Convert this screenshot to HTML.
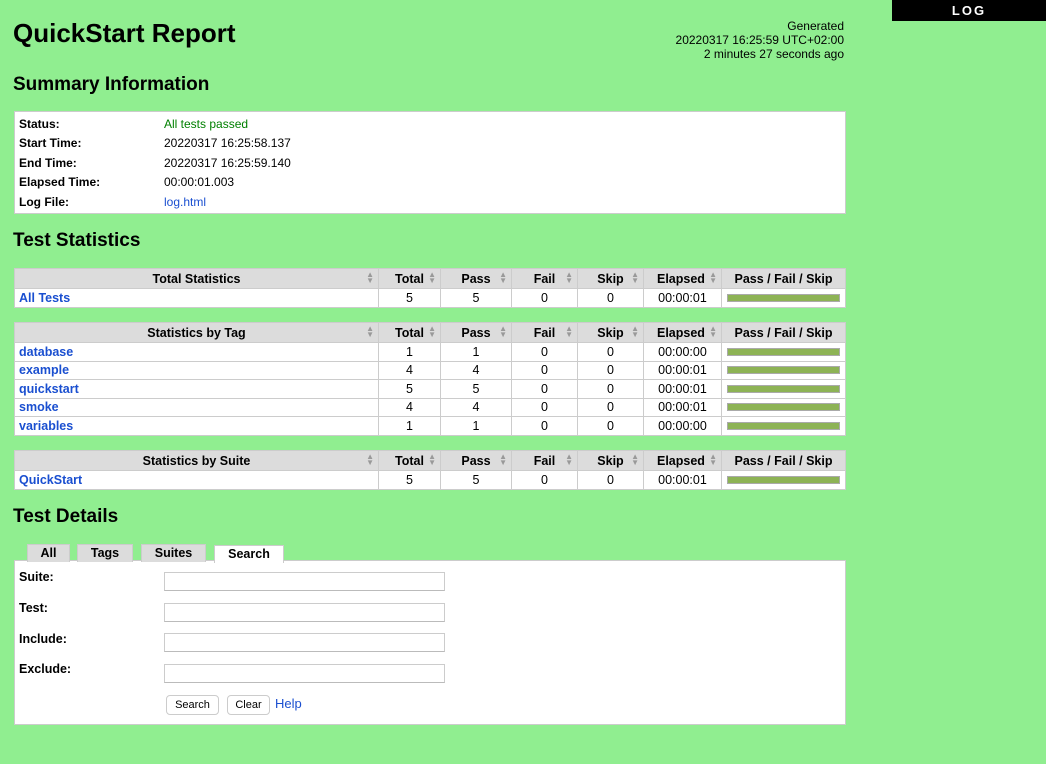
<!DOCTYPE html>
<html><head><meta charset="utf-8"><style>
body{margin:0;background:#90ee90;font-family:"Liberation Sans",Arial,sans-serif;font-size:13px;color:#000;width:1046px;height:764px;overflow:hidden;position:relative}
.a{position:absolute}
h1{position:absolute;left:13px;top:18px;margin:0;font-size:26px;font-weight:bold}
h2{position:absolute;left:13px;margin:0;font-size:19px;font-weight:bold}
#log{left:892px;top:0;width:154px;height:21px;background:#000;color:#fff;font-weight:bold;font-size:13px;text-align:center;line-height:21px;letter-spacing:2px}
#gen{right:202px;top:19px;text-align:right;font-size:12px;line-height:14px}
.box{background:#fff;border:1px solid #ccc;box-sizing:border-box}
.sum td{padding:0 4px;height:19.5px;font-size:12px}
.sum td:first-child{font-weight:bold;width:137px}
a{color:#1a4fd0;text-decoration:none}
table{border-collapse:collapse}
.st{position:absolute;left:14px;width:831px;table-layout:fixed;background:#fff}
.st th{background:#dcdcdc;border:1px solid #ccc;font-weight:bold;height:19px;padding:0;font-size:12.5px;position:relative}
.st td{border:1px solid #ccc;height:17.5px;padding:0 4px;text-align:center;font-size:12.5px}
.st td:first-child{text-align:left;font-weight:bold}
.ar{position:absolute;right:4px;top:3px;color:#999;font-size:8px;line-height:6px}
.bar{height:6px;background:#8db355;border:1px solid #aaa;margin:0 1px}
.tab{position:absolute;top:544px;height:17px;background:#dcdcdc;border:1px solid #ccc;border-bottom:none;font-weight:bold;text-align:center;line-height:17px;font-size:12.5px}
.lbl{position:absolute;left:19px;font-weight:bold;font-size:12.5px}
.in{position:absolute;left:164px;width:281px;height:19px;border:1px solid #ccc;border-bottom-color:#bbb;background:#fff;box-sizing:border-box}
.btn{position:absolute;top:695px;height:18px;border:1px solid #ccc;border-radius:4px;background:#fff;font-size:11px;line-height:18px;text-align:center}
</style></head><body>
<h1>QuickStart Report</h1>
<div id="log" class="a">LOG</div>
<div id="gen" class="a">Generated<br>20220317 16:25:59 UTC+02:00<br>2 minutes 27 seconds ago</div>
<h2 style="top:74px">Summary Information</h2>
<div class="a box" style="left:14px;top:111px;width:832px;height:103px;padding-top:2px">
<table class="sum">
<tr><td>Status:</td><td style="color:#008000">All tests passed</td></tr>
<tr><td>Start Time:</td><td>20220317 16:25:58.137</td></tr>
<tr><td>End Time:</td><td>20220317 16:25:59.140</td></tr>
<tr><td>Elapsed Time:</td><td>00:00:01.003</td></tr>
<tr><td>Log File:</td><td><a>log.html</a></td></tr>
</table></div>
<h2 style="top:230px">Test Statistics</h2>
<table class="st" style="top:268px"><colgroup><col style="width:364px"><col style="width:62px"><col style="width:71px"><col style="width:66px"><col style="width:66px"><col style="width:78px"><col style="width:124px"></colgroup>
<tr><th>Total Statistics<span class="ar">▲<br>▼</span></th><th>Total<span class="ar">▲<br>▼</span></th><th>Pass<span class="ar">▲<br>▼</span></th><th>Fail<span class="ar">▲<br>▼</span></th><th>Skip<span class="ar">▲<br>▼</span></th><th style="text-align:left;padding-left:13px">Elapsed<span class="ar">▲<br>▼</span></th><th>Pass / Fail / Skip</th></tr>
<tr><td><a>All Tests</a></td><td>5</td><td>5</td><td>0</td><td>0</td><td>00:00:01</td><td><div class="bar"></div></td></tr>
</table>
<table class="st" style="top:322px"><colgroup><col style="width:364px"><col style="width:62px"><col style="width:71px"><col style="width:66px"><col style="width:66px"><col style="width:78px"><col style="width:124px"></colgroup>
<tr><th>Statistics by Tag<span class="ar">▲<br>▼</span></th><th>Total<span class="ar">▲<br>▼</span></th><th>Pass<span class="ar">▲<br>▼</span></th><th>Fail<span class="ar">▲<br>▼</span></th><th>Skip<span class="ar">▲<br>▼</span></th><th style="text-align:left;padding-left:13px">Elapsed<span class="ar">▲<br>▼</span></th><th>Pass / Fail / Skip</th></tr>
<tr><td><a>database</a></td><td>1</td><td>1</td><td>0</td><td>0</td><td>00:00:00</td><td><div class="bar"></div></td></tr>
<tr><td><a>example</a></td><td>4</td><td>4</td><td>0</td><td>0</td><td>00:00:01</td><td><div class="bar"></div></td></tr>
<tr><td><a>quickstart</a></td><td>5</td><td>5</td><td>0</td><td>0</td><td>00:00:01</td><td><div class="bar"></div></td></tr>
<tr><td><a>smoke</a></td><td>4</td><td>4</td><td>0</td><td>0</td><td>00:00:01</td><td><div class="bar"></div></td></tr>
<tr><td><a>variables</a></td><td>1</td><td>1</td><td>0</td><td>0</td><td>00:00:00</td><td><div class="bar"></div></td></tr>
</table>
<table class="st" style="top:450px"><colgroup><col style="width:364px"><col style="width:62px"><col style="width:71px"><col style="width:66px"><col style="width:66px"><col style="width:78px"><col style="width:124px"></colgroup>
<tr><th>Statistics by Suite<span class="ar">▲<br>▼</span></th><th>Total<span class="ar">▲<br>▼</span></th><th>Pass<span class="ar">▲<br>▼</span></th><th>Fail<span class="ar">▲<br>▼</span></th><th>Skip<span class="ar">▲<br>▼</span></th><th style="text-align:left;padding-left:13px">Elapsed<span class="ar">▲<br>▼</span></th><th>Pass / Fail / Skip</th></tr>
<tr><td><a>QuickStart</a></td><td>5</td><td>5</td><td>0</td><td>0</td><td>00:00:01</td><td><div class="bar"></div></td></tr>
</table>
<h2 style="top:506px">Test Details</h2>
<div class="a box" style="left:14px;top:560px;width:832px;height:165px"></div>
<div class="tab" style="left:27px;width:41px">All</div>
<div class="tab" style="left:77px;width:54px">Tags</div>
<div class="tab" style="left:141px;width:63px">Suites</div>
<div class="tab" style="left:214px;width:68px;background:#fff;top:545px;height:17px">Search</div>
<div class="lbl" style="top:570px">Suite:</div>
<div class="lbl" style="top:601px">Test:</div>
<div class="lbl" style="top:632px">Include:</div>
<div class="lbl" style="top:662px">Exclude:</div>
<div class="in" style="top:572px"></div>
<div class="in" style="top:603px"></div>
<div class="in" style="top:633px"></div>
<div class="in" style="top:664px"></div>
<div class="btn" style="left:166px;width:51px">Search</div>
<div class="btn" style="left:227px;width:41px">Clear</div>
<a class="a" style="left:275px;top:696px;font-size:13px">Help</a>
</body></html>
